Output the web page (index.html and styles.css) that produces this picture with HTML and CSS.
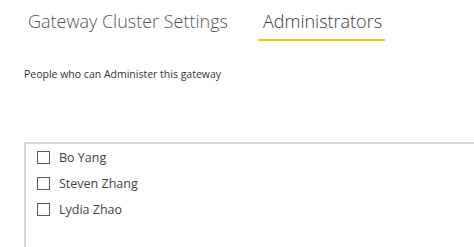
FILE: index.html
```html
<!DOCTYPE html>
<html>
<head>
<meta charset="utf-8">
<link rel="stylesheet" href="styles.css">
</head>
<body>
<div class="page">
  <nav class="tabs">
    <div class="tab">Gateway Cluster Settings</div>
    <div class="tab active">Administrators</div>
  </nav>
  <p class="desc">People who can Administer this gateway</p>
  <div class="list">
    <label class="item"><span class="box"></span><span class="name">Bo Yang</span></label>
    <label class="item"><span class="box"></span><span class="name">Steven Zhang</span></label>
    <label class="item"><span class="box"></span><span class="name">Lydia Zhao</span></label>
  </div>
</div>
</body>
</html>
```
FILE: styles.css
```css
html, body {
  margin: 0;
  padding: 0;
  background: #ffffff;
  overflow: hidden;
}
body {
  font-family: "Open Sans", "Noto Sans", sans-serif;
  color: #333;
}
.page {
  width: 474px;
  height: 247px;
  overflow: hidden;
}
.tabs {
  display: flex;
  padding-left: 28px;
  padding-top: 6px;
  gap: 30px;
}
.tab {
  font-size: 18px;
  font-weight: 300;
  color: #555;
  line-height: 30px;
  padding-bottom: 3px;
  border-bottom: 2px solid transparent;
}
.tab.active {
  color: #3a3a3a;
  padding-left: 5px;
  padding-right: 3px;
  border-bottom-color: #f2c811;
}
.desc {
  margin: 26px 0 0 24px;
  font-size: 10.5px;
  color: #333;
}
.list {
  margin: 61px 0 0 24px;
  border-top: 2px solid #d6d6d6;
  border-left: 2px solid #d6d6d6;
  height: 120px;
  padding-top: 0;
  display: flex;
  flex-direction: column;
}
.item {
  display: flex;
  align-items: center;
  height: 26px;
  padding-left: 11px;
  gap: 9px;
}
.box {
  width: 11px;
  height: 11px;
  border: 1.5px solid #5a5a5a;
  background: #fff;
}
.name {
  font-size: 12.5px;
  color: #444;
}
```
